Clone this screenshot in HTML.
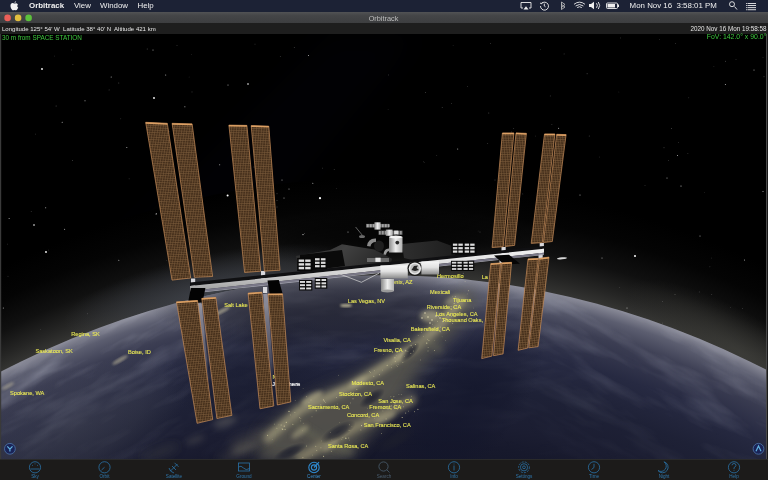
<!DOCTYPE html>
<html><head><meta charset="utf-8">
<style>
html,body{margin:0;padding:0;width:768px;height:480px;overflow:hidden;background:#000;font-family:"Liberation Sans",sans-serif;}
#scene{position:absolute;left:0;top:0;width:768px;height:480px;}
.t{position:absolute;white-space:nowrap;line-height:1;}
#menubar{position:absolute;left:0;top:0;width:768px;height:12px;background:#1c2235;}
#titlebar{position:absolute;left:0;top:12px;width:768px;height:11px;background:linear-gradient(#525355,#454648 30%,#3d3e40);}
#infobar{position:absolute;left:0;top:23px;width:768px;height:11px;background:#1e1e1e;}
#toolbar{position:absolute;left:0;top:459px;width:768px;height:21px;background:#1c1b1a;border-top:0.5px solid #2a2a2a;box-sizing:border-box;}
.mi{position:absolute;color:#f0f0f0;font-size:7.9px;top:2.3px;white-space:nowrap;line-height:1;}
.info{position:absolute;color:#e6e6e6;font-size:6.06px;white-space:nowrap;line-height:1;}
.green{position:absolute;color:#3ec83e;font-size:6.37px;white-space:nowrap;line-height:1;}
text.lb{font-family:"Liberation Sans",sans-serif;font-size:5.65px;fill:#eeec56;stroke:#eeec56;stroke-width:0.08px;}
text.lbw{font-family:"Liberation Sans",sans-serif;font-size:5.9px;fill:#f4f4f4;stroke:#f4f4f4;stroke-width:0.2px;}
.tbl{position:absolute;font-size:4.6px;color:#2f78ae;top:475.3px;white-space:nowrap;line-height:1;transform:translateX(-50%);}
</style></head>
<body>
<svg id="scene" width="768" height="480" viewBox="0 0 768 480">
<defs>
  <radialGradient id="glow" gradientUnits="userSpaceOnUse" cx="385.4" cy="1745.0" r="1151.9" gradientTransform="translate(385.4 1745.0) scale(1 1.3610) translate(-385.4 -1745.0)">
    <stop offset="0.93" stop-color="#363634"/>
    <stop offset="0.9374" stop-color="#343432"/>
    <stop offset="0.9466" stop-color="#252524"/>
    <stop offset="0.9613" stop-color="#101010"/>
    <stop offset="0.9802" stop-color="#040404"/>
    <stop offset="1" stop-color="#000"/>
  </radialGradient>
  <radialGradient id="earth" gradientUnits="userSpaceOnUse" cx="385.4" cy="1745.0" r="1079.9" gradientTransform="translate(385.4 1745.0) scale(1 1.3610) translate(-385.4 -1745.0)">
    <stop offset="0.8748" stop-color="#15172a"/>
    <stop offset="0.8884" stop-color="#17192c"/>
    <stop offset="0.902" stop-color="#1b1d31"/>
    <stop offset="0.9286" stop-color="#1e2136"/>
    <stop offset="0.9551" stop-color="#272a42"/>
    <stop offset="0.9776" stop-color="#3c3e53"/>
    <stop offset="0.9911" stop-color="#5c5e70"/>
    <stop offset="1" stop-color="#8a8b98"/>
  </radialGradient>
  <linearGradient id="truss" x1="0" y1="0" x2="0" y2="1">
    <stop offset="0" stop-color="#f2f2f2"/><stop offset="0.6" stop-color="#d2d2d2"/><stop offset="1" stop-color="#9c9c9c"/>
  </linearGradient>
  <linearGradient id="cylh" x1="0" y1="0" x2="0" y2="1">
    <stop offset="0" stop-color="#f6f6f6"/><stop offset="0.45" stop-color="#e2e2e2"/><stop offset="1" stop-color="#8a8a8a"/>
  </linearGradient>
  <linearGradient id="cylv" x1="0" y1="0" x2="1" y2="0">
    <stop offset="0" stop-color="#8a8a8a"/><stop offset="0.5" stop-color="#ededed"/><stop offset="1" stop-color="#b0b0b0"/>
  </linearGradient>
  <linearGradient id="plane" x1="0" y1="0" x2="1" y2="0.3"><stop offset="0" stop-color="#2a2a2a"/><stop offset="0.5" stop-color="#404040"/><stop offset="1" stop-color="#262626"/></linearGradient>
<pattern id="g0" width="2.55" height="2.35" patternUnits="userSpaceOnUse" patternTransform="translate(145.7 122.3) skewX(-9.03) skewY(2.65)"><rect width="2.55" height="2.35" fill="#46301c"/><rect width="2.55" height="0.5" fill="#7a5a3a"/><rect width="0.5" height="2.35" fill="#7a5a3a"/></pattern>
<pattern id="g1" width="2.55" height="2.35" patternUnits="userSpaceOnUse" patternTransform="translate(172.1 123.3) skewX(-7.95) skewY(1.72)"><rect width="2.55" height="2.35" fill="#46301c"/><rect width="2.55" height="0.5" fill="#7a5a3a"/><rect width="0.5" height="2.35" fill="#7a5a3a"/></pattern>
<pattern id="g2" width="2.55" height="2.35" patternUnits="userSpaceOnUse" patternTransform="translate(228.9 125.1) skewX(-5.74) skewY(0.95)"><rect width="2.55" height="2.35" fill="#46301c"/><rect width="2.55" height="0.5" fill="#7a5a3a"/><rect width="0.5" height="2.35" fill="#7a5a3a"/></pattern>
<pattern id="g3" width="2.55" height="2.35" patternUnits="userSpaceOnUse" patternTransform="translate(251.2 125.6) skewX(-4.81) skewY(1.95)"><rect width="2.55" height="2.35" fill="#46301c"/><rect width="2.55" height="0.5" fill="#7a5a3a"/><rect width="0.5" height="2.35" fill="#7a5a3a"/></pattern>
<pattern id="g4" width="2.55" height="2.35" patternUnits="userSpaceOnUse" patternTransform="translate(176.5 301.9) skewX(-8.46) skewY(-3.81)"><rect width="2.55" height="2.35" fill="#46301c"/><rect width="2.55" height="0.5" fill="#7a5a3a"/><rect width="0.5" height="2.35" fill="#7a5a3a"/></pattern>
<pattern id="g5" width="2.55" height="2.35" patternUnits="userSpaceOnUse" patternTransform="translate(201.8 298.4) skewX(-7.47) skewY(-4.09)"><rect width="2.55" height="2.35" fill="#46301c"/><rect width="2.55" height="0.5" fill="#7a5a3a"/><rect width="0.5" height="2.35" fill="#7a5a3a"/></pattern>
<pattern id="g6" width="2.55" height="2.35" patternUnits="userSpaceOnUse" patternTransform="translate(248.1 293.1) skewX(-5.92) skewY(-3.73)"><rect width="2.55" height="2.35" fill="#46301c"/><rect width="2.55" height="0.5" fill="#7a5a3a"/><rect width="0.5" height="2.35" fill="#7a5a3a"/></pattern>
<pattern id="g7" width="2.55" height="2.35" patternUnits="userSpaceOnUse" patternTransform="translate(268.0 294.0) skewX(-4.59) skewY(-0.79)"><rect width="2.55" height="2.35" fill="#46301c"/><rect width="2.55" height="0.5" fill="#7a5a3a"/><rect width="0.5" height="2.35" fill="#7a5a3a"/></pattern>
<pattern id="g8" width="2.55" height="2.35" patternUnits="userSpaceOnUse" patternTransform="translate(502.4 133.0) skewX(5.26) skewY(0.00)"><rect width="2.55" height="2.35" fill="#46301c"/><rect width="2.55" height="0.5" fill="#7a5a3a"/><rect width="0.5" height="2.35" fill="#7a5a3a"/></pattern>
<pattern id="g9" width="2.55" height="2.35" patternUnits="userSpaceOnUse" patternTransform="translate(516.0 133.0) skewX(5.77) skewY(1.65)"><rect width="2.55" height="2.35" fill="#46301c"/><rect width="2.55" height="0.5" fill="#7a5a3a"/><rect width="0.5" height="2.35" fill="#7a5a3a"/></pattern>
<pattern id="g10" width="2.55" height="2.35" patternUnits="userSpaceOnUse" patternTransform="translate(544.5 134.0) skewX(6.77) skewY(0.00)"><rect width="2.55" height="2.35" fill="#46301c"/><rect width="2.55" height="0.5" fill="#7a5a3a"/><rect width="0.5" height="2.35" fill="#7a5a3a"/></pattern>
<pattern id="g11" width="2.55" height="2.35" patternUnits="userSpaceOnUse" patternTransform="translate(556.7 134.3) skewX(7.18) skewY(1.83)"><rect width="2.55" height="2.35" fill="#46301c"/><rect width="2.55" height="0.5" fill="#7a5a3a"/><rect width="0.5" height="2.35" fill="#7a5a3a"/></pattern>
<pattern id="g12" width="2.55" height="2.35" patternUnits="userSpaceOnUse" patternTransform="translate(490.8 263.6) skewX(5.41) skewY(-3.50)"><rect width="2.55" height="2.35" fill="#46301c"/><rect width="2.55" height="0.5" fill="#7a5a3a"/><rect width="0.5" height="2.35" fill="#7a5a3a"/></pattern>
<pattern id="g13" width="2.55" height="2.35" patternUnits="userSpaceOnUse" patternTransform="translate(501.7 262.9) skewX(5.18) skewY(-3.47)"><rect width="2.55" height="2.35" fill="#46301c"/><rect width="2.55" height="0.5" fill="#7a5a3a"/><rect width="0.5" height="2.35" fill="#7a5a3a"/></pattern>
<pattern id="g14" width="2.55" height="2.35" patternUnits="userSpaceOnUse" patternTransform="translate(528.0 259.0) skewX(6.53) skewY(-3.30)"><rect width="2.55" height="2.35" fill="#46301c"/><rect width="2.55" height="0.5" fill="#7a5a3a"/><rect width="0.5" height="2.35" fill="#7a5a3a"/></pattern>
<pattern id="g15" width="2.55" height="2.35" patternUnits="userSpaceOnUse" patternTransform="translate(539.5 258.3) skewX(6.88) skewY(-7.20)"><rect width="2.55" height="2.35" fill="#46301c"/><rect width="2.55" height="0.5" fill="#7a5a3a"/><rect width="0.5" height="2.35" fill="#7a5a3a"/></pattern>
  <radialGradient id="darkblob"><stop offset="0" stop-color="#12152a" stop-opacity="0.7"/><stop offset="0.6" stop-color="#12152a" stop-opacity="0.45"/><stop offset="1" stop-color="#12152a" stop-opacity="0"/></radialGradient>
  <radialGradient id="darkblob2"><stop offset="0" stop-color="#14172a" stop-opacity="0.45"/><stop offset="0.6" stop-color="#14172a" stop-opacity="0.3"/><stop offset="1" stop-color="#14172a" stop-opacity="0"/></radialGradient>
  <radialGradient id="rglow"><stop offset="0" stop-color="#3e3e3a" stop-opacity="0.75"/><stop offset="0.5" stop-color="#3a3a36" stop-opacity="0.4"/><stop offset="1" stop-color="#3a3a36" stop-opacity="0"/></radialGradient>
  <radialGradient id="cdark"><stop offset="0" stop-color="#000" stop-opacity="0.75"/><stop offset="0.6" stop-color="#000" stop-opacity="0.5"/><stop offset="1" stop-color="#000" stop-opacity="0"/></radialGradient>
  <radialGradient id="edark"><stop offset="0" stop-color="#1a1b26" stop-opacity="0.62"/><stop offset="0.6" stop-color="#1a1b26" stop-opacity="0.45"/><stop offset="1" stop-color="#1a1b26" stop-opacity="0"/></radialGradient>
  <linearGradient id="mastg" x1="0" y1="0" x2="0" y2="1"><stop offset="0" stop-color="#9a9aa8" stop-opacity="0.9"/><stop offset="0.6" stop-color="#7a7a8a" stop-opacity="0.6"/><stop offset="1" stop-color="#6a6a7a" stop-opacity="0"/></linearGradient>
  <radialGradient id="lglow"><stop offset="0" stop-color="#40444e" stop-opacity="0.75"/><stop offset="0.5" stop-color="#3a3e48" stop-opacity="0.45"/><stop offset="1" stop-color="#3a3e48" stop-opacity="0"/></radialGradient>
  <linearGradient id="plane2" x1="0" y1="0" x2="1" y2="0"><stop offset="0" stop-color="#2e2e2e"/><stop offset="1" stop-color="#1e1e1e"/></linearGradient>
  <radialGradient id="hole"><stop offset="0" stop-color="#1c1e2c" stop-opacity="0.8"/><stop offset="0.5" stop-color="#1c1e2c" stop-opacity="0.6"/><stop offset="1" stop-color="#1c1e2c" stop-opacity="0"/></radialGradient>
  <radialGradient id="graycl"><stop offset="0" stop-color="#50525e" stop-opacity="0.4"/><stop offset="0.6" stop-color="#50525e" stop-opacity="0.25"/><stop offset="1" stop-color="#50525e" stop-opacity="0"/></radialGradient>
  <pattern id="grid" width="2.6" height="2.6" patternUnits="userSpaceOnUse">
    <rect width="2.6" height="2.6" fill="#4c3016"/>
    <rect width="2.6" height="0.6" fill="#86603a"/>
    <rect width="0.6" height="2.6" fill="#86603a"/>
  </pattern>
  <clipPath id="earthclip"><ellipse cx="385.4" cy="1745.0" rx="1079.9" ry="1469.7"/></clipPath>
  <filter id="clouds" x="0" y="0" width="100%" height="100%">
    <feTurbulence type="fractalNoise" baseFrequency="0.012 0.055" numOctaves="4" seed="7" result="n"/>
    <feColorMatrix in="n" type="matrix" values="0 0 0 0 0.6  0 0 0 0 0.62  0 0 0 0 0.72  0 0 0 2.2 -1.0"/>
  </filter>
  <filter id="clouds2" x="0" y="0" width="100%" height="100%">
    <feTurbulence type="fractalNoise" baseFrequency="0.012 0.055" numOctaves="4" seed="3" result="n"/>
    <feColorMatrix in="n" type="matrix" values="0 0 0 0 0.6  0 0 0 0 0.62  0 0 0 0 0.72  0 0 0 2.2 -1.0"/>
  </filter>
  <filter id="clouds3" x="0" y="0" width="100%" height="100%">
    <feTurbulence type="fractalNoise" baseFrequency="0.012 0.055" numOctaves="4" seed="11" result="n"/>
    <feColorMatrix in="n" type="matrix" values="0 0 0 0 0.6  0 0 0 0 0.62  0 0 0 0 0.72  0 0 0 2.2 -1.0"/>
  </filter>
  <linearGradient id="gL" x1="0" y1="0" x2="1" y2="0" gradientUnits="objectBoundingBox"><stop offset="0" stop-color="#fff"/><stop offset="0.7" stop-color="#fff"/><stop offset="1" stop-color="#000"/></linearGradient>
  <linearGradient id="gC" x1="0" y1="0" x2="1" y2="0"><stop offset="0" stop-color="#000"/><stop offset="0.25" stop-color="#fff"/><stop offset="0.75" stop-color="#fff"/><stop offset="1" stop-color="#000"/></linearGradient>
  <linearGradient id="gR" x1="0" y1="0" x2="1" y2="0"><stop offset="0" stop-color="#000"/><stop offset="0.3" stop-color="#fff"/><stop offset="1" stop-color="#fff"/></linearGradient>
  <radialGradient id="radm" gradientUnits="userSpaceOnUse" cx="385.4" cy="1745.0" r="1079.9" gradientTransform="translate(385.4 1745.0) scale(1 1.3610) translate(-385.4 -1745.0)">
    <stop offset="0.8837" stop-color="#000"/><stop offset="0.9197" stop-color="#1a1a1a"/><stop offset="0.9646" stop-color="#3c3c3c"/><stop offset="1" stop-color="#5e5e5e"/>
  </radialGradient>
  <mask id="mRad" maskUnits="userSpaceOnUse" x="0" y="0" width="768" height="480"><rect width="768" height="480" fill="url(#radm)"/></mask>
  <mask id="mL" maskUnits="userSpaceOnUse" x="0" y="0" width="768" height="480"><rect x="0" y="0" width="300" height="480" fill="url(#gL)"/></mask>
  <mask id="mC" maskUnits="userSpaceOnUse" x="0" y="0" width="768" height="480"><rect x="200" y="0" width="400" height="480" fill="url(#gC)"/></mask>
  <mask id="mR" maskUnits="userSpaceOnUse" x="0" y="0" width="768" height="480"><rect x="480" y="0" width="288" height="480" fill="url(#gR)"/></mask>
  <filter id="b2" filterUnits="userSpaceOnUse" x="-100" y="-100" width="968" height="680"><feGaussianBlur stdDeviation="2"/></filter>
  <filter id="b5" filterUnits="userSpaceOnUse" x="-100" y="-100" width="968" height="680"><feGaussianBlur stdDeviation="5"/></filter>
  <filter id="b1"><feGaussianBlur stdDeviation="1"/></filter>
  <filter id="b3" filterUnits="userSpaceOnUse" x="-100" y="-100" width="968" height="680"><feGaussianBlur stdDeviation="3"/></filter>
  <filter id="b8" filterUnits="userSpaceOnUse" x="-100" y="-100" width="968" height="680"><feGaussianBlur stdDeviation="8"/></filter>
  <filter id="b15" filterUnits="userSpaceOnUse" x="-100" y="-100" width="968" height="680"><feGaussianBlur stdDeviation="15"/></filter>
</defs>
<rect width="768" height="480" fill="#000"/>
<!-- faint milky way -->
<path d="M330,34 L420,34 L200,300 L60,300 Z" fill="#0c1020" opacity="0.14" filter="url(#b15)"/>
<!-- atmosphere glow -->
<ellipse cx="385.4" cy="1745.0" rx="1151.9" ry="1567.7" fill="url(#glow)"/>
<ellipse cx="740" cy="352" rx="130" ry="38" transform="rotate(30 740 352)" fill="url(#rglow)"/>
<ellipse cx="390" cy="240" rx="150" ry="32" fill="url(#cdark)"/>
<ellipse cx="210" cy="292" rx="150" ry="38" transform="rotate(-12 210 292)" fill="url(#lglow)"/>
<g id="stars"><circle cx="42.0" cy="69.0" r="0.90" fill="#fff" opacity="1.00"/>
<circle cx="154.0" cy="98.0" r="0.90" fill="#fff" opacity="1.00"/>
<circle cx="248.0" cy="84.0" r="0.80" fill="#fff" opacity="1.00"/>
<circle cx="85.0" cy="100.7" r="0.50" fill="#fff" opacity="0.75"/>
<circle cx="153.0" cy="50.0" r="0.50" fill="#fff" opacity="0.75"/>
<circle cx="34.0" cy="225.0" r="0.80" fill="#fff" opacity="1.00"/>
<circle cx="46.0" cy="252.0" r="0.90" fill="#fff" opacity="1.00"/>
<circle cx="156.0" cy="214.0" r="0.50" fill="#fff" opacity="0.75"/>
<circle cx="320.0" cy="198.2" r="1.10" fill="#fff" opacity="1.00"/>
<circle cx="227.6" cy="195.6" r="1.00" fill="#fff" opacity="1.00"/>
<circle cx="303.0" cy="234.6" r="0.70" fill="#fff" opacity="0.75"/>
<circle cx="277.0" cy="193.8" r="0.45" fill="#fff" opacity="0.45"/>
<circle cx="277.0" cy="200.5" r="0.45" fill="#fff" opacity="0.45"/>
<circle cx="277.0" cy="207.0" r="0.45" fill="#fff" opacity="0.45"/>
<circle cx="312.8" cy="183.3" r="0.50" fill="#fff" opacity="0.75"/>
<circle cx="156.5" cy="213.8" r="0.50" fill="#fff" opacity="0.75"/>
<circle cx="254.0" cy="167.0" r="0.45" fill="#fff" opacity="0.45"/>
<circle cx="635.0" cy="256.0" r="1.00" fill="#fff" opacity="1.00"/>
<circle cx="504.0" cy="249.0" r="0.90" fill="#fff" opacity="1.00"/>
<circle cx="602.0" cy="258.0" r="0.50" fill="#fff" opacity="0.75"/>
<circle cx="627.0" cy="308.0" r="0.50" fill="#fff" opacity="0.75"/>
<circle cx="681.0" cy="186.0" r="0.60" fill="#fff" opacity="0.75"/>
<circle cx="667.0" cy="178.0" r="0.50" fill="#fff" opacity="0.75"/>
<circle cx="228.0" cy="85.0" r="0.50" fill="#fff" opacity="0.75"/>
<circle cx="198.0" cy="300.0" r="0.50" fill="#fff" opacity="0.75"/>
<circle cx="289.0" cy="189.0" r="0.50" fill="#fff" opacity="0.75"/>
<circle cx="282.0" cy="180.0" r="0.50" fill="#fff" opacity="0.75"/>
<circle cx="284.0" cy="198.0" r="0.50" fill="#fff" opacity="0.75"/>
<circle cx="348.0" cy="232.0" r="0.50" fill="#fff" opacity="0.75"/>
<circle cx="700.0" cy="236.0" r="0.50" fill="#fff" opacity="0.75"/>
<circle cx="580.0" cy="195.0" r="0.50" fill="#fff" opacity="0.75"/>
<circle cx="495.0" cy="180.0" r="0.40" fill="#fff" opacity="0.45"/>
<circle cx="480.0" cy="232.0" r="0.40" fill="#fff" opacity="0.45"/>
<circle cx="490.5" cy="43.4" r="0.40" fill="#fff" opacity="0.45"/>
<circle cx="189.1" cy="77.0" r="0.30" fill="#fff" opacity="0.45"/>
<circle cx="519.0" cy="298.3" r="0.30" fill="#fff" opacity="0.45"/>
<circle cx="453.1" cy="45.3" r="0.30" fill="#fff" opacity="0.45"/>
<circle cx="169.0" cy="184.6" r="0.30" fill="#fff" opacity="0.45"/>
<circle cx="430.8" cy="246.5" r="0.50" fill="#fff" opacity="0.75"/>
<circle cx="322.5" cy="168.1" r="0.40" fill="#fff" opacity="0.45"/>
<circle cx="620.4" cy="37.9" r="0.35" fill="#fff" opacity="0.45"/>
<circle cx="535.4" cy="136.0" r="0.35" fill="#fff" opacity="0.45"/>
<circle cx="166.5" cy="260.5" r="0.30" fill="#fff" opacity="0.45"/>
<circle cx="72.9" cy="64.4" r="0.40" fill="#fff" opacity="0.45"/>
<circle cx="463.2" cy="273.3" r="0.45" fill="#fff" opacity="0.45"/>
<circle cx="411.7" cy="322.1" r="0.45" fill="#fff" opacity="0.45"/>
<circle cx="62.2" cy="122.2" r="0.50" fill="#fff" opacity="0.75"/>
<circle cx="678.5" cy="142.3" r="0.35" fill="#fff" opacity="0.45"/>
<circle cx="540.3" cy="49.5" r="0.35" fill="#fff" opacity="0.45"/>
<circle cx="592.6" cy="325.7" r="0.35" fill="#fff" opacity="0.45"/>
<circle cx="664.0" cy="147.8" r="0.45" fill="#fff" opacity="0.45"/>
<circle cx="487.7" cy="143.3" r="0.40" fill="#fff" opacity="0.45"/>
<circle cx="273.4" cy="233.0" r="0.30" fill="#fff" opacity="0.45"/>
<circle cx="467.4" cy="86.3" r="0.35" fill="#fff" opacity="0.45"/>
<circle cx="126.8" cy="147.6" r="0.50" fill="#fff" opacity="0.75"/>
<circle cx="169.8" cy="131.3" r="0.30" fill="#fff" opacity="0.45"/>
<circle cx="177.0" cy="45.4" r="0.40" fill="#fff" opacity="0.45"/>
<circle cx="308.5" cy="55.5" r="0.50" fill="#fff" opacity="0.75"/>
<circle cx="671.5" cy="128.5" r="0.45" fill="#fff" opacity="0.45"/>
<circle cx="304.3" cy="304.9" r="0.45" fill="#fff" opacity="0.45"/>
<circle cx="111.2" cy="77.1" r="0.50" fill="#fff" opacity="0.75"/>
<circle cx="413.8" cy="255.6" r="0.45" fill="#fff" opacity="0.45"/>
<circle cx="687.9" cy="153.4" r="0.35" fill="#fff" opacity="0.45"/>
<circle cx="764.0" cy="76.7" r="0.45" fill="#fff" opacity="0.45"/>
<circle cx="71.5" cy="49.9" r="0.30" fill="#fff" opacity="0.45"/>
<circle cx="118.8" cy="83.0" r="0.45" fill="#fff" opacity="0.45"/>
<circle cx="457.7" cy="149.1" r="0.50" fill="#fff" opacity="0.75"/>
<circle cx="763.0" cy="191.6" r="0.50" fill="#fff" opacity="0.75"/>
<circle cx="659.6" cy="39.4" r="0.30" fill="#fff" opacity="0.45"/>
<circle cx="522.8" cy="193.9" r="0.40" fill="#fff" opacity="0.45"/>
<circle cx="589.2" cy="136.0" r="0.40" fill="#fff" opacity="0.45"/>
<circle cx="334.2" cy="169.4" r="0.40" fill="#fff" opacity="0.45"/>
<circle cx="744.5" cy="260.0" r="0.50" fill="#fff" opacity="0.75"/>
<circle cx="699.2" cy="291.9" r="0.40" fill="#fff" opacity="0.45"/>
<circle cx="645.0" cy="185.3" r="0.35" fill="#fff" opacity="0.45"/>
<circle cx="118.8" cy="260.2" r="0.50" fill="#fff" opacity="0.75"/>
<circle cx="730.5" cy="307.2" r="0.30" fill="#fff" opacity="0.45"/>
<circle cx="459.6" cy="179.7" r="0.30" fill="#fff" opacity="0.45"/>
<circle cx="711.8" cy="294.3" r="0.40" fill="#fff" opacity="0.45"/>
<circle cx="184.9" cy="106.8" r="0.50" fill="#fff" opacity="0.75"/>
<circle cx="725.5" cy="61.2" r="0.45" fill="#fff" opacity="0.45"/>
<circle cx="625.4" cy="323.5" r="0.50" fill="#fff" opacity="0.75"/>
<circle cx="587.1" cy="73.7" r="0.45" fill="#fff" opacity="0.45"/>
<circle cx="725.4" cy="84.5" r="0.50" fill="#fff" opacity="0.75"/>
<circle cx="668.5" cy="160.4" r="0.35" fill="#fff" opacity="0.45"/>
<circle cx="711.7" cy="258.0" r="0.35" fill="#fff" opacity="0.45"/>
<circle cx="546.7" cy="153.3" r="0.40" fill="#fff" opacity="0.45"/>
<circle cx="336.7" cy="188.2" r="0.30" fill="#fff" opacity="0.45"/>
<circle cx="191.4" cy="54.8" r="0.30" fill="#fff" opacity="0.45"/>
<circle cx="451.5" cy="103.7" r="0.35" fill="#fff" opacity="0.45"/>
<circle cx="7.5" cy="244.1" r="0.30" fill="#fff" opacity="0.45"/>
<circle cx="176.9" cy="302.2" r="0.40" fill="#fff" opacity="0.45"/>
<circle cx="56.1" cy="106.0" r="0.45" fill="#fff" opacity="0.45"/>
<circle cx="165.7" cy="74.9" r="0.50" fill="#fff" opacity="0.75"/>
<circle cx="442.2" cy="107.4" r="0.45" fill="#fff" opacity="0.45"/>
<circle cx="618.9" cy="92.0" r="0.30" fill="#fff" opacity="0.45"/>
<circle cx="505.5" cy="140.2" r="0.45" fill="#fff" opacity="0.45"/>
<circle cx="358.8" cy="250.3" r="0.30" fill="#fff" opacity="0.45"/>
<circle cx="48.3" cy="250.1" r="0.30" fill="#fff" opacity="0.45"/>
<circle cx="192.0" cy="91.9" r="0.45" fill="#fff" opacity="0.45"/>
<circle cx="109.1" cy="89.9" r="0.45" fill="#fff" opacity="0.45"/>
<circle cx="192.9" cy="307.4" r="0.45" fill="#fff" opacity="0.45"/>
<circle cx="619.3" cy="287.7" r="0.30" fill="#fff" opacity="0.45"/>
<circle cx="40.6" cy="329.8" r="0.30" fill="#fff" opacity="0.45"/>
<circle cx="742.3" cy="308.4" r="0.35" fill="#fff" opacity="0.45"/>
<circle cx="129.1" cy="178.8" r="0.35" fill="#fff" opacity="0.45"/>
<circle cx="662.6" cy="301.3" r="0.35" fill="#fff" opacity="0.45"/>
<circle cx="291.5" cy="325.7" r="0.40" fill="#fff" opacity="0.45"/>
<circle cx="709.9" cy="266.8" r="0.40" fill="#fff" opacity="0.45"/>
<circle cx="325.2" cy="317.5" r="0.50" fill="#fff" opacity="0.75"/>
<circle cx="507.7" cy="179.1" r="0.35" fill="#fff" opacity="0.45"/>
<circle cx="228.7" cy="320.8" r="0.50" fill="#fff" opacity="0.75"/>
<circle cx="564.1" cy="53.9" r="0.40" fill="#fff" opacity="0.45"/>
<circle cx="45.7" cy="207.7" r="0.50" fill="#fff" opacity="0.75"/>
<circle cx="704.4" cy="192.2" r="0.30" fill="#fff" opacity="0.45"/>
<circle cx="736.0" cy="59.6" r="0.35" fill="#fff" opacity="0.45"/>
<circle cx="54.4" cy="56.0" r="0.35" fill="#fff" opacity="0.45"/>
<circle cx="310.5" cy="312.8" r="0.50" fill="#fff" opacity="0.75"/>
<circle cx="190.1" cy="210.8" r="0.50" fill="#fff" opacity="0.75"/>
<circle cx="64.6" cy="229.3" r="0.50" fill="#fff" opacity="0.75"/>
<circle cx="401.4" cy="310.8" r="0.35" fill="#fff" opacity="0.45"/>
<circle cx="513.7" cy="128.4" r="0.40" fill="#fff" opacity="0.45"/>
<circle cx="304.4" cy="233.5" r="0.40" fill="#fff" opacity="0.45"/>
<circle cx="351.3" cy="309.1" r="0.30" fill="#fff" opacity="0.45"/>
<circle cx="9.1" cy="218.6" r="0.50" fill="#fff" opacity="0.75"/>
<circle cx="763.0" cy="57.5" r="0.35" fill="#fff" opacity="0.45"/>
<circle cx="388.5" cy="74.9" r="0.40" fill="#fff" opacity="0.45"/>
<circle cx="675.0" cy="294.5" r="0.40" fill="#fff" opacity="0.45"/>
<circle cx="219.7" cy="164.8" r="0.50" fill="#fff" opacity="0.75"/>
<circle cx="539.5" cy="215.8" r="0.50" fill="#fff" opacity="0.75"/>
<circle cx="8.0" cy="276.2" r="0.40" fill="#fff" opacity="0.45"/>
<circle cx="713.9" cy="66.5" r="0.35" fill="#fff" opacity="0.45"/>
<circle cx="204.1" cy="297.6" r="0.50" fill="#fff" opacity="0.75"/>
<circle cx="120.8" cy="118.8" r="0.35" fill="#fff" opacity="0.45"/>
<circle cx="550.3" cy="95.9" r="0.40" fill="#fff" opacity="0.45"/>
<circle cx="388.1" cy="109.8" r="0.30" fill="#fff" opacity="0.45"/>
<circle cx="72.5" cy="160.5" r="0.40" fill="#fff" opacity="0.45"/>
<circle cx="35.7" cy="134.1" r="0.35" fill="#fff" opacity="0.45"/>
<circle cx="488.8" cy="113.0" r="0.45" fill="#fff" opacity="0.45"/>
<circle cx="423.5" cy="161.7" r="0.30" fill="#fff" opacity="0.45"/>
<circle cx="87.5" cy="313.8" r="0.35" fill="#fff" opacity="0.45"/>
<circle cx="418.8" cy="281.4" r="0.50" fill="#fff" opacity="0.75"/>
<circle cx="424.1" cy="162.4" r="0.30" fill="#fff" opacity="0.45"/>
<circle cx="237.5" cy="300.3" r="0.30" fill="#fff" opacity="0.45"/>
<circle cx="688.8" cy="97.8" r="0.35" fill="#fff" opacity="0.45"/>
<circle cx="511.5" cy="140.0" r="0.50" fill="#fff" opacity="0.75"/>
<circle cx="677.5" cy="155.5" r="0.50" fill="#fff" opacity="0.75"/>
<circle cx="574.6" cy="308.2" r="0.35" fill="#fff" opacity="0.45"/>
<circle cx="662.6" cy="323.0" r="0.35" fill="#fff" opacity="0.45"/>
<circle cx="675.4" cy="43.3" r="0.40" fill="#fff" opacity="0.45"/>
<circle cx="599.7" cy="157.0" r="0.35" fill="#fff" opacity="0.45"/>
<circle cx="205.8" cy="267.5" r="0.30" fill="#fff" opacity="0.45"/>
<circle cx="294.3" cy="47.4" r="0.45" fill="#fff" opacity="0.45"/>
<circle cx="171.9" cy="276.1" r="0.45" fill="#fff" opacity="0.45"/>
<circle cx="269.1" cy="277.2" r="0.35" fill="#fff" opacity="0.45"/>
<circle cx="172.3" cy="230.0" r="0.45" fill="#fff" opacity="0.45"/>
<circle cx="252.8" cy="290.1" r="0.40" fill="#fff" opacity="0.45"/>
<circle cx="270.3" cy="185.8" r="0.50" fill="#fff" opacity="0.75"/>
<circle cx="255.0" cy="44.1" r="0.40" fill="#fff" opacity="0.45"/>
<circle cx="138.4" cy="319.0" r="0.40" fill="#fff" opacity="0.45"/>
<circle cx="31.2" cy="211.4" r="0.40" fill="#fff" opacity="0.45"/>
<circle cx="558.6" cy="128.2" r="0.50" fill="#fff" opacity="0.75"/>
<circle cx="754.0" cy="70.0" r="0.50" fill="#fff" opacity="0.75"/>
<circle cx="147.2" cy="49.0" r="0.45" fill="#fff" opacity="0.45"/>
<circle cx="3.3" cy="308.1" r="0.50" fill="#fff" opacity="0.75"/>
<circle cx="526.8" cy="312.4" r="0.35" fill="#fff" opacity="0.45"/>
<circle cx="280.3" cy="56.6" r="0.40" fill="#fff" opacity="0.45"/>
<circle cx="478.1" cy="231.0" r="0.30" fill="#fff" opacity="0.45"/>
<circle cx="551.9" cy="124.3" r="0.40" fill="#fff" opacity="0.45"/>
<circle cx="511.5" cy="131.9" r="0.40" fill="#fff" opacity="0.45"/>
<circle cx="425.6" cy="92.4" r="0.45" fill="#fff" opacity="0.45"/>
<circle cx="519.5" cy="301.4" r="0.50" fill="#fff" opacity="0.75"/>
<circle cx="436.8" cy="155.4" r="0.30" fill="#fff" opacity="0.45"/></g>
<!-- earth -->
<ellipse cx="385.4" cy="1745.0" rx="1079.9" ry="1469.7" fill="url(#earth)"/>
<g clip-path="url(#earthclip)">
  <g mask="url(#mRad)">
    <g mask="url(#mL)"><g transform="rotate(-28 130 360)"><rect x="-150" y="200" width="560" height="320" filter="url(#clouds)"/></g></g>
    <g mask="url(#mC)" opacity="0.8"><g transform="rotate(-4 384 330)"><rect x="140" y="230" width="500" height="260" filter="url(#clouds2)"/></g></g>
    <g mask="url(#mR)" opacity="0.75"><g transform="rotate(28 640 360)"><rect x="380" y="200" width="560" height="320" filter="url(#clouds3)"/></g></g>
  </g>
  <ellipse cx="315" cy="306" rx="165" ry="46" fill="url(#edark)"/>
  <ellipse cx="70" cy="430" rx="130" ry="55" transform="rotate(-25 70 430)" fill="url(#graycl)"/>
  <!-- city light band -->
  <ellipse cx="470" cy="400" rx="110" ry="50" transform="rotate(-55 470 400)" fill="url(#darkblob)"/>
  <ellipse cx="250" cy="365" rx="90" ry="45" transform="rotate(-15 250 365)" fill="url(#darkblob2)"/>
  <path d="M255,462 L262,432 L300,402 L350,380 L390,356 L425,326 L448,300 L470,288 L478,300 L452,336 L420,370 L400,402 L372,432 L345,462 Z" fill="#5a5850" opacity="0.85" filter="url(#b8)"/>
  <g filter="url(#b3)" fill="none" stroke-linecap="round">
    <path d="M268,438 L300,410 L349,388 L385,366 L417,346 L440,325 L462,300" stroke="#a09a7a" stroke-width="9" opacity="0.8"/>
    <path d="M300,458 L354,428 L396,408 L412,400" stroke="#948e70" stroke-width="9" opacity="0.75"/>
    <path d="M290,420 L320,440 L350,452" stroke="#6a6858" stroke-width="7" opacity="0.5"/>
    <path d="M405,355 L425,340 L440,350" stroke="#6a6858" stroke-width="6" opacity="0.5"/>
  </g>
  <g>
    <ellipse cx="338" cy="432" rx="20" ry="7" transform="rotate(-30 338 432)" fill="url(#hole)"/>
    <ellipse cx="372" cy="398" rx="15" ry="6" transform="rotate(-35 372 398)" fill="url(#hole)"/>
    <ellipse cx="290" cy="452" rx="18" ry="6" transform="rotate(-25 290 452)" fill="url(#hole)"/>
    <ellipse cx="410" cy="352" rx="13" ry="5" transform="rotate(-45 410 352)" fill="url(#hole)"/>
    <ellipse cx="395" cy="440" rx="24" ry="8" transform="rotate(-30 395 440)" fill="url(#hole)"/>
  </g>
  <g filter="url(#b3)" fill="#8a8878">
    <ellipse cx="225" cy="422" rx="12" ry="4" transform="rotate(-20 225 422)" opacity="0.35"/>
    <ellipse cx="245" cy="448" rx="14" ry="4" transform="rotate(-20 245 448)" opacity="0.3"/>
    <ellipse cx="195" cy="440" rx="10" ry="3" transform="rotate(-20 195 440)" opacity="0.25"/>
  </g>
  <g filter="url(#b2)" fill="#c0b890">
    <ellipse cx="312" cy="398" rx="12" ry="4" transform="rotate(-30 312 398)" opacity="0.6"/>
    <ellipse cx="358" cy="382" rx="10" ry="3" transform="rotate(-30 358 382)" opacity="0.5"/>
    <ellipse cx="385" cy="418" rx="12" ry="3.5" transform="rotate(-25 385 418)" opacity="0.5"/>
    <ellipse cx="430" cy="316" rx="10" ry="6" opacity="0.6"/>
    <ellipse cx="452" cy="300" rx="8" ry="3" transform="rotate(-30 452 300)" opacity="0.5"/>
    <ellipse cx="400" cy="356" rx="9" ry="3" transform="rotate(-40 400 356)" opacity="0.5"/>
    <ellipse cx="300" cy="432" rx="10" ry="3.5" transform="rotate(-35 300 432)" opacity="0.45"/>
    <ellipse cx="330" cy="446" rx="9" ry="3" transform="rotate(-35 330 446)" opacity="0.4"/>
    <ellipse cx="262" cy="307" rx="8" ry="2.2" opacity="0.45"/>
  </g>
  <g filter="url(#b5)" fill="#6a6858">
    <ellipse cx="250" cy="440" rx="22" ry="7" transform="rotate(-20 250 440)" opacity="0.35"/>
    <ellipse cx="235" cy="455" rx="18" ry="5" transform="rotate(-15 235 455)" opacity="0.3"/>
    <ellipse cx="160" cy="452" rx="20" ry="5" transform="rotate(-20 160 452)" opacity="0.2"/>
  </g>
  <circle cx="353.0" cy="398.7" r="0.55" fill="#f0e8b0" opacity="0.54"/>
<circle cx="274.5" cy="424.1" r="0.45" fill="#f0e8b0" opacity="0.63"/>
<circle cx="276.9" cy="428.2" r="0.35" fill="#f0e8b0" opacity="0.90"/>
<circle cx="373.8" cy="376.3" r="0.55" fill="#f0e8b0" opacity="0.50"/>
<circle cx="370.6" cy="372.3" r="0.35" fill="#f0e8b0" opacity="0.87"/>
<circle cx="303.1" cy="388.6" r="0.35" fill="#f0e8b0" opacity="0.54"/>
<circle cx="382.4" cy="370.0" r="0.35" fill="#f0e8b0" opacity="0.81"/>
<circle cx="281.1" cy="425.0" r="0.45" fill="#f0e8b0" opacity="0.90"/>
<circle cx="300.8" cy="418.4" r="0.45" fill="#f0e8b0" opacity="0.50"/>
<circle cx="442.1" cy="336.8" r="0.35" fill="#f0e8b0" opacity="0.44"/>
<circle cx="404.6" cy="356.6" r="0.35" fill="#f0e8b0" opacity="0.47"/>
<circle cx="285.1" cy="429.4" r="0.55" fill="#f0e8b0" opacity="0.53"/>
<circle cx="412.6" cy="347.3" r="0.45" fill="#f0e8b0" opacity="0.47"/>
<circle cx="394.9" cy="357.7" r="0.55" fill="#f0e8b0" opacity="0.65"/>
<circle cx="432.7" cy="324.2" r="0.35" fill="#f0e8b0" opacity="0.75"/>
<circle cx="383.2" cy="354.5" r="0.35" fill="#f0e8b0" opacity="0.65"/>
<circle cx="420.4" cy="359.9" r="0.45" fill="#f0e8b0" opacity="0.60"/>
<circle cx="278.9" cy="424.8" r="0.35" fill="#f0e8b0" opacity="0.40"/>
<circle cx="294.9" cy="412.6" r="0.45" fill="#f0e8b0" opacity="0.74"/>
<circle cx="418.2" cy="335.4" r="0.45" fill="#f0e8b0" opacity="0.55"/>
<circle cx="440.7" cy="330.1" r="0.35" fill="#f0e8b0" opacity="0.61"/>
<circle cx="395.4" cy="350.4" r="0.45" fill="#f0e8b0" opacity="0.56"/>
<circle cx="449.4" cy="320.9" r="0.45" fill="#f0e8b0" opacity="0.40"/>
<circle cx="428.0" cy="350.9" r="0.45" fill="#f0e8b0" opacity="0.82"/>
<circle cx="428.1" cy="347.7" r="0.35" fill="#f0e8b0" opacity="0.87"/>
<circle cx="325.7" cy="402.3" r="0.35" fill="#f0e8b0" opacity="0.76"/>
<circle cx="267.6" cy="435.4" r="0.55" fill="#f0e8b0" opacity="0.54"/>
<circle cx="303.2" cy="423.3" r="0.45" fill="#f0e8b0" opacity="0.43"/>
<circle cx="292.9" cy="424.2" r="0.45" fill="#f0e8b0" opacity="0.90"/>
<circle cx="452.6" cy="323.5" r="0.55" fill="#f0e8b0" opacity="0.44"/>
<circle cx="405.5" cy="350.2" r="0.45" fill="#f0e8b0" opacity="0.78"/>
<circle cx="442.6" cy="328.6" r="0.35" fill="#f0e8b0" opacity="0.54"/>
<circle cx="369.5" cy="371.3" r="0.35" fill="#f0e8b0" opacity="0.82"/>
<circle cx="299.6" cy="417.8" r="0.45" fill="#f0e8b0" opacity="0.72"/>
<circle cx="309.0" cy="402.2" r="0.35" fill="#f0e8b0" opacity="0.52"/>
<circle cx="336.6" cy="397.5" r="0.45" fill="#f0e8b0" opacity="0.62"/>
<circle cx="338.7" cy="375.3" r="0.45" fill="#f0e8b0" opacity="0.49"/>
<circle cx="409.2" cy="341.9" r="0.45" fill="#f0e8b0" opacity="0.79"/>
<circle cx="434.5" cy="350.5" r="0.45" fill="#f0e8b0" opacity="0.84"/>
<circle cx="442.7" cy="321.6" r="0.55" fill="#f0e8b0" opacity="0.60"/>
<circle cx="358.7" cy="382.4" r="0.55" fill="#f0e8b0" opacity="0.67"/>
<circle cx="413.5" cy="351.0" r="0.55" fill="#f0e8b0" opacity="0.44"/>
<circle cx="316.2" cy="410.7" r="0.55" fill="#f0e8b0" opacity="0.61"/>
<circle cx="282.7" cy="429.2" r="0.55" fill="#f0e8b0" opacity="0.78"/>
<circle cx="286.3" cy="422.3" r="0.55" fill="#f0e8b0" opacity="0.83"/>
<circle cx="442.0" cy="315.9" r="0.45" fill="#f0e8b0" opacity="0.42"/>
<circle cx="320.8" cy="404.9" r="0.55" fill="#f0e8b0" opacity="0.46"/>
<circle cx="306.3" cy="396.8" r="0.45" fill="#f0e8b0" opacity="0.61"/>
<circle cx="374.3" cy="370.8" r="0.45" fill="#f0e8b0" opacity="0.55"/>
<circle cx="284.2" cy="426.1" r="0.55" fill="#f0e8b0" opacity="0.77"/>
<circle cx="440.3" cy="327.1" r="0.55" fill="#f0e8b0" opacity="0.53"/>
<circle cx="451.1" cy="306.6" r="0.55" fill="#f0e8b0" opacity="0.52"/>
<circle cx="402.9" cy="362.5" r="0.45" fill="#f0e8b0" opacity="0.68"/>
<circle cx="467.2" cy="293.9" r="0.45" fill="#f0e8b0" opacity="0.46"/>
<circle cx="324.5" cy="401.1" r="0.55" fill="#f0e8b0" opacity="0.48"/>
<circle cx="417.9" cy="329.9" r="0.35" fill="#f0e8b0" opacity="0.65"/>
<circle cx="350.4" cy="402.9" r="0.45" fill="#f0e8b0" opacity="0.68"/>
<circle cx="468.7" cy="290.7" r="0.45" fill="#f0e8b0" opacity="0.85"/>
<circle cx="437.5" cy="321.2" r="0.45" fill="#f0e8b0" opacity="0.61"/>
<circle cx="387.2" cy="365.4" r="0.55" fill="#f0e8b0" opacity="0.50"/>
<circle cx="272.2" cy="439.4" r="0.35" fill="#f0e8b0" opacity="0.49"/>
<circle cx="428.9" cy="340.4" r="0.55" fill="#f0e8b0" opacity="0.45"/>
<circle cx="473.5" cy="308.0" r="0.35" fill="#f0e8b0" opacity="0.58"/>
<circle cx="356.8" cy="389.5" r="0.55" fill="#f0e8b0" opacity="0.50"/>
<circle cx="312.0" cy="416.8" r="0.35" fill="#f0e8b0" opacity="0.77"/>
<circle cx="453.7" cy="307.3" r="0.45" fill="#f0e8b0" opacity="0.59"/>
<circle cx="415.4" cy="344.5" r="0.55" fill="#f0e8b0" opacity="0.66"/>
<circle cx="427.6" cy="339.2" r="0.45" fill="#f0e8b0" opacity="0.54"/>
<circle cx="423.5" cy="336.2" r="0.35" fill="#f0e8b0" opacity="0.65"/>
<circle cx="426.8" cy="343.1" r="0.55" fill="#f0e8b0" opacity="0.88"/>
<circle cx="451.8" cy="309.2" r="0.35" fill="#f0e8b0" opacity="0.74"/>
<circle cx="454.2" cy="303.2" r="0.55" fill="#f0e8b0" opacity="0.71"/>
<circle cx="302.5" cy="430.8" r="0.35" fill="#f0e8b0" opacity="0.45"/>
<circle cx="445.4" cy="340.3" r="0.35" fill="#f0e8b0" opacity="0.59"/>
<circle cx="455.3" cy="296.8" r="0.55" fill="#f0e8b0" opacity="0.62"/>
<circle cx="395.2" cy="361.2" r="0.45" fill="#f0e8b0" opacity="0.82"/>
<circle cx="452.4" cy="296.5" r="0.35" fill="#f0e8b0" opacity="0.46"/>
<circle cx="438.4" cy="316.5" r="0.45" fill="#f0e8b0" opacity="0.75"/>
<circle cx="440.5" cy="331.8" r="0.45" fill="#f0e8b0" opacity="0.88"/>
<circle cx="337.7" cy="403.9" r="0.45" fill="#f0e8b0" opacity="0.40"/>
<circle cx="323.5" cy="399.8" r="0.45" fill="#f0e8b0" opacity="0.87"/>
<circle cx="444.7" cy="320.6" r="0.55" fill="#f0e8b0" opacity="0.83"/>
<circle cx="407.9" cy="351.3" r="0.45" fill="#f0e8b0" opacity="0.52"/>
<circle cx="441.3" cy="312.3" r="0.35" fill="#f0e8b0" opacity="0.51"/>
<circle cx="398.1" cy="364.2" r="0.35" fill="#f0e8b0" opacity="0.66"/>
<circle cx="319.2" cy="408.2" r="0.55" fill="#f0e8b0" opacity="0.45"/>
<circle cx="289.0" cy="411.4" r="0.55" fill="#f0e8b0" opacity="0.75"/>
<circle cx="391.4" cy="367.8" r="0.45" fill="#f0e8b0" opacity="0.44"/>
<circle cx="396.4" cy="355.7" r="0.35" fill="#f0e8b0" opacity="0.40"/>
<circle cx="396.6" cy="365.2" r="0.35" fill="#f0e8b0" opacity="0.52"/>
<circle cx="421.3" cy="332.2" r="0.35" fill="#f0e8b0" opacity="0.72"/>
<circle cx="437.2" cy="329.7" r="0.45" fill="#f0e8b0" opacity="0.88"/>
<circle cx="397.0" cy="352.2" r="0.55" fill="#f0e8b0" opacity="0.53"/>
<circle cx="411.1" cy="345.6" r="0.55" fill="#f0e8b0" opacity="0.62"/>
<circle cx="391.8" cy="364.5" r="0.35" fill="#f0e8b0" opacity="0.45"/>
<circle cx="451.5" cy="316.3" r="0.45" fill="#f0e8b0" opacity="0.66"/>
<circle cx="410.8" cy="353.5" r="0.55" fill="#f0e8b0" opacity="0.50"/>
<circle cx="300.6" cy="420.9" r="0.45" fill="#f0e8b0" opacity="0.51"/>
<circle cx="282.1" cy="428.9" r="0.55" fill="#f0e8b0" opacity="0.40"/>
<circle cx="421.0" cy="329.0" r="0.55" fill="#f0e8b0" opacity="0.55"/>
<circle cx="295.2" cy="400.6" r="0.45" fill="#f0e8b0" opacity="0.54"/>
<circle cx="311.0" cy="399.9" r="0.45" fill="#f0e8b0" opacity="0.72"/>
<circle cx="323.3" cy="400.6" r="0.35" fill="#f0e8b0" opacity="0.64"/>
<circle cx="397.3" cy="366.7" r="0.35" fill="#f0e8b0" opacity="0.67"/>
<circle cx="290.2" cy="414.9" r="0.35" fill="#f0e8b0" opacity="0.88"/>
<circle cx="352.6" cy="393.8" r="0.55" fill="#f0e8b0" opacity="0.72"/>
<circle cx="434.7" cy="340.3" r="0.35" fill="#f0e8b0" opacity="0.41"/>
<circle cx="379.3" cy="374.7" r="0.45" fill="#f0e8b0" opacity="0.84"/>
<circle cx="405.9" cy="350.9" r="0.55" fill="#f0e8b0" opacity="0.61"/>
<circle cx="465.1" cy="281.5" r="0.45" fill="#f0e8b0" opacity="0.51"/>
<circle cx="316.8" cy="450.6" r="0.45" fill="#f0e8b0" opacity="0.86"/>
<circle cx="400.9" cy="409.0" r="0.35" fill="#f0e8b0" opacity="0.65"/>
<circle cx="376.2" cy="415.8" r="0.55" fill="#f0e8b0" opacity="0.57"/>
<circle cx="351.2" cy="447.4" r="0.45" fill="#f0e8b0" opacity="0.58"/>
<circle cx="382.9" cy="410.9" r="0.45" fill="#f0e8b0" opacity="0.50"/>
<circle cx="306.5" cy="446.0" r="0.45" fill="#f0e8b0" opacity="0.77"/>
<circle cx="320.9" cy="447.7" r="0.55" fill="#f0e8b0" opacity="0.43"/>
<circle cx="414.4" cy="411.7" r="0.45" fill="#f0e8b0" opacity="0.88"/>
<circle cx="315.8" cy="446.2" r="0.45" fill="#f0e8b0" opacity="0.78"/>
<circle cx="339.6" cy="422.4" r="0.35" fill="#f0e8b0" opacity="0.52"/>
<circle cx="349.3" cy="440.1" r="0.35" fill="#f0e8b0" opacity="0.53"/>
<circle cx="341.8" cy="439.2" r="0.45" fill="#f0e8b0" opacity="0.45"/>
<circle cx="310.0" cy="459.2" r="0.55" fill="#f0e8b0" opacity="0.65"/>
<circle cx="349.7" cy="424.8" r="0.35" fill="#f0e8b0" opacity="0.85"/>
<circle cx="377.8" cy="423.8" r="0.45" fill="#f0e8b0" opacity="0.61"/>
<circle cx="302.9" cy="457.6" r="0.55" fill="#f0e8b0" opacity="0.43"/>
<circle cx="394.9" cy="405.0" r="0.55" fill="#f0e8b0" opacity="0.47"/>
<circle cx="374.8" cy="418.2" r="0.45" fill="#f0e8b0" opacity="0.43"/>
<circle cx="395.8" cy="407.7" r="0.35" fill="#f0e8b0" opacity="0.89"/>
<circle cx="397.5" cy="409.2" r="0.35" fill="#f0e8b0" opacity="0.61"/>
<circle cx="403.4" cy="406.8" r="0.55" fill="#f0e8b0" opacity="0.43"/>
<circle cx="401.3" cy="394.4" r="0.45" fill="#f0e8b0" opacity="0.62"/>
<circle cx="361.6" cy="425.6" r="0.55" fill="#f0e8b0" opacity="0.84"/>
<circle cx="331.4" cy="451.3" r="0.55" fill="#f0e8b0" opacity="0.46"/>
<circle cx="342.9" cy="437.5" r="0.35" fill="#f0e8b0" opacity="0.87"/>
<circle cx="411.5" cy="396.2" r="0.45" fill="#f0e8b0" opacity="0.50"/>
<circle cx="345.9" cy="438.5" r="0.55" fill="#f0e8b0" opacity="0.87"/>
<circle cx="374.0" cy="426.8" r="0.55" fill="#f0e8b0" opacity="0.63"/>
<circle cx="360.9" cy="429.9" r="0.45" fill="#f0e8b0" opacity="0.73"/>
<circle cx="381.5" cy="433.4" r="0.45" fill="#f0e8b0" opacity="0.82"/>
<circle cx="349.9" cy="430.4" r="0.45" fill="#f0e8b0" opacity="0.62"/>
<circle cx="351.9" cy="426.4" r="0.35" fill="#f0e8b0" opacity="0.40"/>
<circle cx="331.9" cy="439.9" r="0.45" fill="#f0e8b0" opacity="0.44"/>
<circle cx="348.8" cy="438.0" r="0.45" fill="#f0e8b0" opacity="0.88"/>
<circle cx="312.7" cy="455.1" r="0.35" fill="#f0e8b0" opacity="0.68"/>
<circle cx="330.3" cy="432.7" r="0.35" fill="#f0e8b0" opacity="0.59"/>
<circle cx="393.9" cy="396.7" r="0.45" fill="#f0e8b0" opacity="0.81"/>
<circle cx="401.4" cy="406.9" r="0.45" fill="#f0e8b0" opacity="0.44"/>
<circle cx="417.9" cy="409.4" r="0.55" fill="#f0e8b0" opacity="0.64"/>
<circle cx="405.8" cy="413.0" r="0.45" fill="#f0e8b0" opacity="0.67"/>
<circle cx="398.9" cy="394.4" r="0.45" fill="#f0e8b0" opacity="0.50"/>
<circle cx="408.4" cy="411.1" r="0.45" fill="#f0e8b0" opacity="0.77"/>
<circle cx="382.0" cy="406.9" r="0.45" fill="#f0e8b0" opacity="0.42"/>
<circle cx="390.9" cy="396.7" r="0.45" fill="#f0e8b0" opacity="0.52"/>
<circle cx="395.0" cy="402.9" r="0.55" fill="#f0e8b0" opacity="0.78"/>
<circle cx="309.5" cy="460.1" r="0.35" fill="#f0e8b0" opacity="0.59"/>
<circle cx="321.6" cy="440.9" r="0.45" fill="#f0e8b0" opacity="0.43"/>
<circle cx="383.7" cy="402.8" r="0.35" fill="#f0e8b0" opacity="0.53"/>
<circle cx="386.1" cy="418.9" r="0.55" fill="#f0e8b0" opacity="0.43"/>
<circle cx="391.2" cy="405.9" r="0.55" fill="#f0e8b0" opacity="0.57"/>
<circle cx="405.5" cy="413.1" r="0.45" fill="#f0e8b0" opacity="0.57"/>
<circle cx="345.8" cy="437.8" r="0.55" fill="#f0e8b0" opacity="0.42"/>
<circle cx="402.2" cy="417.5" r="0.55" fill="#f0e8b0" opacity="0.76"/>
<circle cx="404.0" cy="400.9" r="0.45" fill="#f0e8b0" opacity="0.86"/>
<circle cx="367.5" cy="408.3" r="0.45" fill="#f0e8b0" opacity="0.40"/>
<circle cx="388.0" cy="408.8" r="0.55" fill="#f0e8b0" opacity="0.86"/>
<circle cx="323.6" cy="456.3" r="0.55" fill="#f0e8b0" opacity="0.87"/>
<circle cx="348.3" cy="430.2" r="0.35" fill="#f0e8b0" opacity="0.41"/>
<circle cx="308.6" cy="462.9" r="0.35" fill="#f0e8b0" opacity="0.45"/>
<circle cx="394.6" cy="402.2" r="0.55" fill="#f0e8b0" opacity="0.88"/>
<circle cx="428.0" cy="317.0" r="0.7" fill="#fff6c8" opacity="0.85"/>
<circle cx="432.0" cy="320.0" r="0.7" fill="#fff6c8" opacity="0.85"/>
<circle cx="425.0" cy="313.0" r="0.7" fill="#fff6c8" opacity="0.85"/>
<circle cx="436.0" cy="316.0" r="0.7" fill="#fff6c8" opacity="0.85"/>
<circle cx="430.0" cy="323.0" r="0.7" fill="#fff6c8" opacity="0.85"/>
<circle cx="440.0" cy="318.0" r="0.7" fill="#fff6c8" opacity="0.85"/>
<circle cx="422.0" cy="318.0" r="0.7" fill="#fff6c8" opacity="0.85"/>
  <ellipse cx="222" cy="311" rx="9" ry="2" fill="#c8c0a0" opacity="0.55" filter="url(#b1)" transform="rotate(-28 222 311)"/>
  <ellipse cx="120" cy="360" rx="9" ry="2.2" fill="#c8c0a0" opacity="0.5" filter="url(#b1)" transform="rotate(-30 120 360)"/>
  <ellipse cx="8" cy="386" rx="7" ry="2" fill="#c8c0a0" opacity="0.4" filter="url(#b1)" transform="rotate(-30 8 386)"/>
  <ellipse cx="346" cy="305.5" rx="6" ry="1.8" fill="#d8d0a8" opacity="0.7" filter="url(#b1)"/>
</g>
<g id="labels"><text x="71.2" y="335.9" class="lb">Regina, SK</text>
<text x="35.4" y="352.7" class="lb">Saskatoon, SK</text>
<text x="127.9" y="354.3" class="lb">Boise, ID</text>
<text x="10.0" y="394.8" class="lb">Spokane, WA</text>
<text x="224.2" y="306.9" class="lb">Salt Lake</text>
<text x="347.8" y="303.3" class="lb">Las Vegas, NV</text>
<text x="437.0" y="278.0" class="lb">Hermosillo</text>
<text x="481.7" y="279.4" class="lb">La Paz</text>
<text x="430.0" y="293.9" class="lb">Mexicali</text>
<text x="453.0" y="301.9" class="lb">Tijuana</text>
<text x="426.7" y="308.9" class="lb">Riverside, CA</text>
<text x="435.8" y="316.4" class="lb">Los Angeles, CA</text>
<text x="441.7" y="322.2" class="lb">Thousand Oaks, CA</text>
<text x="410.8" y="330.9" class="lb">Bakersfield, CA</text>
<text x="383.4" y="341.6" class="lb">Visalia, CA</text>
<text x="374.0" y="351.9" class="lb">Fresno, CA</text>
<text x="351.5" y="385.0" class="lb">Modesto, CA</text>
<text x="405.9" y="388.0" class="lb">Salinas, CA</text>
<text x="339.0" y="395.9" class="lb">Stockton, CA</text>
<text x="378.3" y="403.4" class="lb">San Jose, CA</text>
<text x="307.9" y="409.0" class="lb">Sacramento, CA</text>
<text x="369.3" y="409.0" class="lb">Fremont, CA</text>
<text x="346.9" y="416.9" class="lb">Concord, CA</text>
<text x="363.7" y="426.6" class="lb">San Francisco, CA</text>
<text x="327.9" y="448.2" class="lb">Santa Rosa, CA</text>
<text x="272.6" y="378.6" class="lb">N</text>
<text x="383.5" y="283.9" class="lb" fill="#e8e8e8"></text>
<text x="272" y="386.4" class="lbw">J</text><text x="288.6" y="386.4" class="lbw">here</text>
<text x="412.5" y="283.9" class="lb" text-anchor="end">Phoenix, AZ</text></g>
<g id="iss"><polygon points="296,256 330,250 342,244.2 374.4,249.4 392,258.8 390,268 345,272 300,276" fill="url(#plane)"/>
<polygon points="300,255 342,250 345,266 300,272" fill="#0a0a0a"/>
<polygon points="402,244 437,240.5 452,246 456,257 420,262 404,258" fill="url(#plane2)"/>
<rect x="191.0" y="278.5" width="4.2" height="8.5" fill="#d8d8dc"/>
<rect x="261.0" y="271.0" width="4.2" height="8.0" fill="#d8d8dc"/>
<rect x="196.0" y="290.0" width="4.2" height="11.0" fill="#d8d8dc"/>
<rect x="263.0" y="287.0" width="4.2" height="6.0" fill="#d8d8dc"/>
<rect x="501.5" y="247.0" width="4.2" height="7.0" fill="#d8d8dc"/>
<rect x="539.7" y="243.0" width="4.2" height="6.0" fill="#d8d8dc"/>
<rect x="499.5" y="257.0" width="4.2" height="6.5" fill="#d8d8dc"/>
<rect x="538.5" y="253.0" width="4.2" height="6.0" fill="#d8d8dc"/>
<polygon points="190.0,282.5 544.0,245.9 544.0,248.8 190.0,286.1" fill="#101012"/>
<polygon points="190.0,286.1 544.0,248.8 544.0,252.7 190.0,290.9" fill="url(#truss)"/>
<polygon points="190.0,290.9 544.0,252.7 544.0,254.3 190.0,292.9" fill="#7a7888"/>
<polygon points="190.0,292.9 544.0,254.3 544.0,254.9 190.0,293.7" fill="#a8a8b4"/>
<ellipse cx="562" cy="258.3" rx="5" ry="1" fill="#d8d8d8" transform="rotate(-6 562 258.3)"/>
<polyline points="336,272.5 361.4,282.3 379,273.2" fill="none" stroke="#d8d8d8" stroke-width="0.7"/>
<polygon points="190.8,288 205.4,288 202.3,303.6 187.7,304.7" fill="#030303"/>
<polygon points="267.5,280.6 278.8,280 282.5,293.5 269.8,294.4" fill="#030303"/>
<polygon points="494,255.5 509,254.8 520,263.8 504,264.5" fill="#060606"/>
<rect x="297.2" y="257.9" width="15.1" height="13.1" fill="#080808"/><rect x="298.7" y="259.5" width="5.4" height="2.4" fill="#dcdcdc"/><rect x="298.7" y="263.2" width="5.4" height="2.4" fill="#dcdcdc"/><rect x="298.7" y="266.9" width="5.4" height="2.4" fill="#dcdcdc"/><rect x="305.2" y="259.5" width="5.4" height="2.4" fill="#dcdcdc"/><rect x="305.2" y="263.2" width="5.4" height="2.4" fill="#dcdcdc"/><rect x="305.2" y="266.9" width="5.4" height="2.4" fill="#dcdcdc"/>
<rect x="313.5" y="256.6" width="13.7" height="12.4" fill="#080808"/><rect x="315.0" y="258.2" width="4.6" height="2.2" fill="#dcdcdc"/><rect x="315.0" y="261.7" width="4.6" height="2.2" fill="#dcdcdc"/><rect x="315.0" y="265.1" width="4.6" height="2.2" fill="#dcdcdc"/><rect x="320.9" y="258.2" width="4.6" height="2.2" fill="#dcdcdc"/><rect x="320.9" y="261.7" width="4.6" height="2.2" fill="#dcdcdc"/><rect x="320.9" y="265.1" width="4.6" height="2.2" fill="#dcdcdc"/>
<rect x="299.1" y="280.0" width="13.2" height="10.5" fill="#080808"/><rect x="300.0" y="281.0" width="5.0" height="1.9" fill="#dcdcdc"/><rect x="300.0" y="284.2" width="5.0" height="1.9" fill="#dcdcdc"/><rect x="300.0" y="287.5" width="5.0" height="1.9" fill="#dcdcdc"/><rect x="306.2" y="281.0" width="5.0" height="1.9" fill="#dcdcdc"/><rect x="306.2" y="284.2" width="5.0" height="1.9" fill="#dcdcdc"/><rect x="306.2" y="287.5" width="5.0" height="1.9" fill="#dcdcdc"/>
<rect x="314.8" y="278.0" width="12.5" height="10.6" fill="#080808"/><rect x="315.7" y="279.0" width="4.6" height="2.0" fill="#dcdcdc"/><rect x="315.7" y="282.3" width="4.6" height="2.0" fill="#dcdcdc"/><rect x="315.7" y="285.5" width="4.6" height="2.0" fill="#dcdcdc"/><rect x="321.5" y="279.0" width="4.6" height="2.0" fill="#dcdcdc"/><rect x="321.5" y="282.3" width="4.6" height="2.0" fill="#dcdcdc"/><rect x="321.5" y="285.5" width="4.6" height="2.0" fill="#dcdcdc"/>
<rect x="451.4" y="242.0" width="13.1" height="12.4" fill="#080808"/><rect x="452.9" y="243.6" width="4.4" height="2.2" fill="#dcdcdc"/><rect x="452.9" y="247.1" width="4.4" height="2.2" fill="#dcdcdc"/><rect x="452.9" y="250.5" width="4.4" height="2.2" fill="#dcdcdc"/><rect x="458.4" y="243.6" width="4.4" height="2.2" fill="#dcdcdc"/><rect x="458.4" y="247.1" width="4.4" height="2.2" fill="#dcdcdc"/><rect x="458.4" y="250.5" width="4.4" height="2.2" fill="#dcdcdc"/>
<rect x="463.2" y="242.0" width="13.1" height="12.4" fill="#080808"/><rect x="464.7" y="243.6" width="4.4" height="2.2" fill="#dcdcdc"/><rect x="464.7" y="247.1" width="4.4" height="2.2" fill="#dcdcdc"/><rect x="464.7" y="250.5" width="4.4" height="2.2" fill="#dcdcdc"/><rect x="470.2" y="243.6" width="4.4" height="2.2" fill="#dcdcdc"/><rect x="470.2" y="247.1" width="4.4" height="2.2" fill="#dcdcdc"/><rect x="470.2" y="250.5" width="4.4" height="2.2" fill="#dcdcdc"/>
<rect x="451.0" y="260.8" width="11.9" height="10.2" fill="#080808"/><rect x="451.9" y="261.8" width="4.4" height="1.8" fill="#dcdcdc"/><rect x="451.9" y="264.9" width="4.4" height="1.8" fill="#dcdcdc"/><rect x="451.9" y="268.1" width="4.4" height="1.8" fill="#dcdcdc"/><rect x="457.4" y="261.8" width="4.4" height="1.8" fill="#dcdcdc"/><rect x="457.4" y="264.9" width="4.4" height="1.8" fill="#dcdcdc"/><rect x="457.4" y="268.1" width="4.4" height="1.8" fill="#dcdcdc"/>
<rect x="462.6" y="260.8" width="11.6" height="10.2" fill="#080808"/><rect x="463.5" y="261.8" width="4.2" height="1.8" fill="#dcdcdc"/><rect x="463.5" y="264.9" width="4.2" height="1.8" fill="#dcdcdc"/><rect x="463.5" y="268.1" width="4.2" height="1.8" fill="#dcdcdc"/><rect x="468.9" y="261.8" width="4.2" height="1.8" fill="#dcdcdc"/><rect x="468.9" y="264.9" width="4.2" height="1.8" fill="#dcdcdc"/><rect x="468.9" y="268.1" width="4.2" height="1.8" fill="#dcdcdc"/>
<rect x="381" y="279" width="13" height="12" fill="url(#cylv)"/>
<ellipse cx="387.5" cy="291" rx="6.5" ry="1.5" fill="#9a9a9a"/>
<rect x="380.4" y="265.4" width="27.4" height="13" fill="url(#cylh)"/>
<circle cx="414.9" cy="268.6" r="7.4" fill="#1a1a1a"/>
<circle cx="414.9" cy="268.6" r="6.2" fill="#e6e6e6"/>
<circle cx="414.9" cy="268.6" r="4.6" fill="#bdbdbd"/>
<path d="M411.5,270 L414,266 L418,265.5 L416.5,268 L419,270 L415,271 Z" fill="#222"/>
<rect x="421.4" y="261.5" width="17.6" height="13" fill="url(#cylh)"/>
<polygon points="366,223.9 389,223.9 389,227.5 366,227.5" fill="#6e6e6e"/>
<rect x="367" y="224.2" width="1.6" height="3" fill="#a8a8a8"/>
<rect x="370" y="224.2" width="1.6" height="3" fill="#a8a8a8"/>
<rect x="373" y="224.2" width="1.6" height="3" fill="#a8a8a8"/>
<rect x="376" y="224.2" width="1.6" height="3" fill="#a8a8a8"/>
<rect x="379" y="224.2" width="1.6" height="3" fill="#a8a8a8"/>
<rect x="382" y="224.2" width="1.6" height="3" fill="#a8a8a8"/>
<rect x="385" y="224.2" width="1.6" height="3" fill="#a8a8a8"/>
<rect x="388" y="224.2" width="1.6" height="3" fill="#a8a8a8"/>
<rect x="374.4" y="222.3" width="6.2" height="7.3" fill="url(#cylv)"/>
<polygon points="378.5,230.6 402.5,230.6 402.5,234.8 378.5,234.8" fill="#5e5e5e"/>
<rect x="379" y="231" width="1.6" height="3.4" fill="#9a9a9a"/>
<rect x="382" y="231" width="1.6" height="3.4" fill="#9a9a9a"/>
<rect x="385" y="231" width="1.6" height="3.4" fill="#9a9a9a"/>
<rect x="388" y="231" width="1.6" height="3.4" fill="#9a9a9a"/>
<rect x="391" y="231" width="1.6" height="3.4" fill="#9a9a9a"/>
<rect x="394" y="231" width="1.6" height="3.4" fill="#9a9a9a"/>
<rect x="397" y="231" width="1.6" height="3.4" fill="#9a9a9a"/>
<rect x="400" y="231" width="1.6" height="3.4" fill="#9a9a9a"/>
<rect x="385.8" y="229.6" width="6.8" height="6.2" fill="url(#cylv)"/>
<rect x="394.2" y="230.6" width="4.1" height="3.6" fill="#e0e0e0"/>
<rect x="389" y="237" width="13.5" height="15.5" fill="url(#cylv)"/>
<ellipse cx="395.75" cy="237" rx="6.75" ry="1.4" fill="#f4f4f4"/>
<circle cx="397.3" cy="242.6" r="1.9" fill="#2a2a2a"/>
<line x1="355.6" y1="227" x2="362.4" y2="235.3" stroke="#8a8a8a" stroke-width="0.7"/>
<ellipse cx="362" cy="236.5" rx="3" ry="1.6" fill="#6a6a6a"/>
<path d="M367,246 Q368,238 376,238.5 L376,242 Q371,242 370.5,246.5 Z" fill="#8a8a8a"/>
<path d="M383.5,254.5 Q384,248 389.5,248.5 L389.5,251 Q386.5,251 386,254.8 Z" fill="#9a9a9a"/>
<ellipse cx="379" cy="246" rx="5" ry="5.5" fill="#1e1e1e"/>
<polygon points="367,258 389,258 389,262 367,262" fill="#6a6a6a"/>
<rect x="375.4" y="257.7" width="5.2" height="4.2" fill="#e6e6e6"/>
<polygon points="196.8,303 201.6,302.5 209.5,385 204.5,385" fill="url(#mastg)"/>
<polygon points="263.2,294 267.6,293.6 274,385 269.6,385" fill="url(#mastg)"/>
<polygon points="145.7,122.3 167.3,123.3 190.7,278.0 172.0,280.1" fill="url(#g0)" stroke="#c98e5a" stroke-width="0.7" stroke-linejoin="round"/>
<line x1="145.7" y1="122.9" x2="167.3" y2="123.9" stroke="#dca064" stroke-width="1.5"/>
<polygon points="172.1,123.3 192.1,123.9 212.6,276.5 194.4,277.3" fill="url(#g1)" stroke="#c98e5a" stroke-width="0.7" stroke-linejoin="round"/>
<line x1="172.1" y1="123.9" x2="192.1" y2="124.5" stroke="#dca064" stroke-width="1.5"/>
<polygon points="228.9,125.1 246.9,125.4 260.7,271.2 244.6,272.5" fill="url(#g2)" stroke="#c98e5a" stroke-width="0.7" stroke-linejoin="round"/>
<line x1="228.9" y1="125.7" x2="246.9" y2="126.0" stroke="#dca064" stroke-width="1.5"/>
<polygon points="251.2,125.6 268.8,126.2 280.0,270.2 264.4,271.2" fill="url(#g3)" stroke="#c98e5a" stroke-width="0.7" stroke-linejoin="round"/>
<line x1="251.2" y1="126.2" x2="268.8" y2="126.8" stroke="#dca064" stroke-width="1.5"/>
<polygon points="176.5,301.9 197.5,300.5 212.7,419.6 197.1,423.3" fill="url(#g4)" stroke="#c98e5a" stroke-width="0.7" stroke-linejoin="round"/>
<line x1="176.5" y1="302.5" x2="197.5" y2="301.1" stroke="#dca064" stroke-width="1.5"/>
<polygon points="201.8,298.4 215.8,297.4 231.9,415.4 216.9,418.5" fill="url(#g5)" stroke="#c98e5a" stroke-width="0.7" stroke-linejoin="round"/>
<line x1="201.8" y1="299.0" x2="215.8" y2="298.0" stroke="#dca064" stroke-width="1.5"/>
<polygon points="248.1,293.1 261.9,292.2 273.8,406.0 260.0,408.8" fill="url(#g6)" stroke="#c98e5a" stroke-width="0.7" stroke-linejoin="round"/>
<line x1="248.1" y1="293.7" x2="261.9" y2="292.8" stroke="#dca064" stroke-width="1.5"/>
<polygon points="268.0,294.0 282.5,293.8 290.8,401.9 277.3,405.0" fill="url(#g7)" stroke="#c98e5a" stroke-width="0.7" stroke-linejoin="round"/>
<line x1="268.0" y1="294.6" x2="282.5" y2="294.4" stroke="#dca064" stroke-width="1.5"/>
<polygon points="502.4,133.0 513.9,133.0 503.2,246.7 492.1,247.6" fill="url(#g8)" stroke="#c98e5a" stroke-width="0.7" stroke-linejoin="round"/>
<line x1="502.4" y1="133.6" x2="513.9" y2="133.6" stroke="#dca064" stroke-width="1.5"/>
<polygon points="516.0,133.0 526.4,133.3 514.6,245.4 505.0,246.5" fill="url(#g9)" stroke="#c98e5a" stroke-width="0.7" stroke-linejoin="round"/>
<line x1="516.0" y1="133.6" x2="526.4" y2="133.9" stroke="#dca064" stroke-width="1.5"/>
<polygon points="544.5,134.0 554.9,134.0 542.3,242.6 531.2,243.4" fill="url(#g10)" stroke="#c98e5a" stroke-width="0.7" stroke-linejoin="round"/>
<line x1="544.5" y1="134.6" x2="554.9" y2="134.6" stroke="#dca064" stroke-width="1.5"/>
<polygon points="556.7,134.3 566.1,134.6 552.3,241.5 543.4,242.5" fill="url(#g11)" stroke="#c98e5a" stroke-width="0.7" stroke-linejoin="round"/>
<line x1="556.7" y1="134.9" x2="566.1" y2="135.2" stroke="#dca064" stroke-width="1.5"/>
<polygon points="490.8,263.6 500.6,263.0 491.9,356.1 481.7,358.6" fill="url(#g12)" stroke="#c98e5a" stroke-width="0.7" stroke-linejoin="round"/>
<line x1="490.8" y1="264.2" x2="500.6" y2="263.6" stroke="#dca064" stroke-width="1.5"/>
<polygon points="501.7,262.9 511.6,262.3 503.1,353.9 493.5,355.7" fill="url(#g13)" stroke="#c98e5a" stroke-width="0.7" stroke-linejoin="round"/>
<line x1="501.7" y1="263.5" x2="511.6" y2="262.9" stroke="#dca064" stroke-width="1.5"/>
<polygon points="528.0,259.0 538.4,258.4 527.6,348.1 518.1,350.3" fill="url(#g14)" stroke="#c98e5a" stroke-width="0.7" stroke-linejoin="round"/>
<line x1="528.0" y1="259.6" x2="538.4" y2="259.0" stroke="#dca064" stroke-width="1.5"/>
<polygon points="539.5,258.3 549.0,257.1 538.1,346.6 528.8,347.8" fill="url(#g15)" stroke="#c98e5a" stroke-width="0.7" stroke-linejoin="round"/>
<line x1="539.5" y1="258.9" x2="549.0" y2="257.7" stroke="#dca064" stroke-width="1.5"/></g>
<!-- side buttons -->
<g>
  <circle cx="9.9" cy="448.8" r="5.4" fill="#1a2458" stroke="#46689a" stroke-width="1"/>
  <path d="M7.3,446.3 L9.9,449.2 L12.5,446.3 M9.9,449.2 L9.9,451.6" stroke="#62b4e0" stroke-width="1.2" fill="none"/>
  <circle cx="758.5" cy="448.8" r="5.4" fill="#1a2458" stroke="#46689a" stroke-width="1"/>
  <path d="M756,451.3 L758.5,446 L761,451.3" stroke="#62b4e0" stroke-width="1.2" fill="none"/>
</g>
<rect x="0" y="34" width="1.2" height="426" fill="#3a3a3a"/>
<rect x="766" y="34" width="1" height="425" fill="#4a4a4a"/><rect x="767" y="34" width="1" height="425" fill="#1a1a1a"/>
</svg>

<div id="menubar"></div>
<div id="titlebar"></div>
<div id="infobar"></div>
<div id="toolbar"></div>
<!-- menu bar content -->
<svg style="position:absolute;left:10px;top:1px" width="9" height="10" viewBox="0 0 9 10"><path d="M6.1,0.3 C5.3,0.4 4.6,1 4.5,1.9 C5.3,1.9 6,1.3 6.1,0.3 Z M4.4,2.5 C3.8,2.5 3.2,2.1 2.6,2.1 C1.4,2.1 0.5,3.1 0.5,4.7 C0.5,6.6 1.8,9.2 3,9.2 C3.6,9.2 3.8,8.9 4.5,8.9 C5.2,8.9 5.4,9.2 6,9.2 C7,9.2 7.9,7.4 8.2,6.5 C7.2,6.1 6.9,4.6 7.9,3.4 C7.4,2.6 6.7,2.2 6,2.2 C5.3,2.2 5,2.5 4.4,2.5 Z" fill="#f2f2f2"/></svg>
<div class="mi" style="left:29px;font-weight:bold;">Orbitrack</div>
<div class="mi" style="left:74px;">View</div>
<div class="mi" style="left:100px;">Window</div>
<div class="mi" style="left:137.5px;">Help</div>
<div class="mi" style="left:629.6px;">Mon Nov 16&nbsp; 3:58:01 PM</div>
<!-- status icons -->
<svg style="position:absolute;left:518px;top:0" width="250" height="12" viewBox="518 0 250 12">
  <g fill="none" stroke="#eeeeee" stroke-width="0.9">
    <path d="M523,8 L521,8 L521,2.5 L531,2.5 L531,8 L529,8"/>
    <path d="M540.5,6 A4,4 0 1 0 541.5,3.5 M540,3 L541.6,3.8 L542.4,2.2"/>
    <path d="M544.3,3.6 L544.3,6 L545.5,6.8"/>
    <path d="M574,4.3 Q579.5,0 585,4.3 M575.6,6 Q579.5,3 583.4,6 M577.2,7.6 Q579.5,5.8 581.8,7.6"/>
    <path d="M596.5,3.2 Q598.3,5.5 596.5,7.8 M598.3,2 Q601,5.5 598.3,9"/>
    <rect x="606.5" y="3" width="11" height="5.5" rx="1"/>
    <path d="M732,2.2 m-2.5,0 a2.5,2.5 0 1 0 5,0 a2.5,2.5 0 1 0 -5,0 M734.5,4.5 L737,7.5" transform="translate(0,2)"/>
  </g>
  <path d="M523.5,9.5 L526,6.2 L528.5,9.5 Z" fill="#eee"/>
  <path d="M589,4 L591,4 L594,1.8 L594,9.2 L591,7 L589,7 Z" fill="#eee"/>
  <rect x="607.5" y="4" width="7.5" height="3.5" fill="#eee"/>
  <rect x="618" y="4.5" width="1" height="2.5" fill="#eee"/>
  <path d="M561.5,2 L565,4.5 L561.5,7.5 M561.5,2 L561.5,9.5 L565,7 L561.5,4.5" stroke="#ccc" stroke-width="0.8" fill="none"/>
  <g fill="#eee"><rect x="747.5" y="3" width="8.5" height="0.9"/><rect x="747.5" y="5.1" width="8.5" height="0.9"/><rect x="747.5" y="7.2" width="8.5" height="0.9"/><rect x="747.5" y="9.3" width="8.5" height="0.9"/><rect x="746" y="3" width="0.9" height="0.9"/><rect x="746" y="5.1" width="0.9" height="0.9"/><rect x="746" y="7.2" width="0.9" height="0.9"/><rect x="746" y="9.3" width="0.9" height="0.9"/></g>
</svg>
<!-- title bar -->
<svg style="position:absolute;left:0;top:12px" width="40" height="11"><circle cx="7.6" cy="5.9" r="3.3" fill="#ec5f58"/><circle cx="18.1" cy="5.9" r="3.3" fill="#e2be3e"/><circle cx="28.6" cy="5.9" r="3.3" fill="#5cc23c"/></svg>
<div class="t" style="left:368.7px;top:15.3px;font-size:7.3px;color:#bcbcbc;">Orbitrack</div>
<!-- info bar -->
<div class="info" style="left:2px;top:26.2px;">Longitude 125° 54' W&nbsp; Latitude 38° 40' N&nbsp; Altitude 421 km</div>
<div class="green" style="left:2px;top:35px;">30 m from SPACE STATION</div>
<div class="info" style="right:1.6px;top:26px;font-size:6.3px;">2020 Nov 16 Mon 19:58:58</div>
<div class="green" style="right:1.6px;top:34px;font-size:6.9px;">FoV: 142.0° x 90.0°</div>
<!-- toolbar icons -->
<svg style="position:absolute;left:0;top:460px" width="768" height="20" viewBox="0 460 768 20">
  <g fill="none" stroke="#2a72a8" stroke-width="0.8">
    <circle cx="35" cy="467.3" r="5.6"/><path d="M30.5,469 L39.5,469 M32,465 L32.8,465.6 M38,465 L37.2,465.6 M35,463.5 L35,464.3"/>
    <circle cx="104.5" cy="467.3" r="5.6"/><path d="M101.5,470 L104.5,467.3"/>
    <path d="M170.5,471 L177.5,464 M172,466 L176,470 M174.5,462.8 L178.5,466.8 M169,468 Q170,472 174,473"/>
    <rect x="238.5" y="463" width="11" height="8"/><path d="M238.5,467 Q241,465 243.5,468 Q246,471 249.5,468.5"/>
    <g stroke="#2f8ad0" stroke-width="1.1"><circle cx="314" cy="467.5" r="5.2"/><circle cx="314" cy="467.5" r="2.6"/><path d="M314,467.5 L319,462.2"/></g>
    <g stroke="#4a5e70"><circle cx="383.5" cy="466.5" r="4.6"/><path d="M386.8,469.8 L389.5,472.5"/></g>
    <circle cx="454" cy="467.3" r="5.6"/><path d="M454,465.5 L454,470.5 M454,463.6 L454,464.4"/>
    <circle cx="524" cy="467.3" r="3.6"/><circle cx="524" cy="467.3" r="5.4" stroke-dasharray="2 1.2"/><circle cx="524" cy="467.3" r="1.4"/>
    <circle cx="594" cy="467.3" r="5.6"/><path d="M594,463.8 L594,467.5 L591.5,469.5"/>
    <path d="M664,461.8 A5.6,5.6 0 1 1 658,470.5 A5,5 0 0 0 664,461.8 Z"/>
    <circle cx="734" cy="467.3" r="5.6"/><path d="M732,465.3 Q732,463.5 734,463.5 Q736,463.5 736,465.3 Q736,466.6 734,467.6 L734,469.2 M734,470.3 L734,471"/>
  </g>
</svg>
<div class="tbl" style="left:35px;">Sky</div>
<div class="tbl" style="left:104.5px;">Orbit</div>
<div class="tbl" style="left:174px;">Satellite</div>
<div class="tbl" style="left:244px;">Ground</div>
<div class="tbl" style="left:314px;color:#3a90d0;">Center</div>
<div class="tbl" style="left:384px;color:#4a5e70;">Search</div>
<div class="tbl" style="left:454px;">Info</div>
<div class="tbl" style="left:524px;">Settings</div>
<div class="tbl" style="left:594px;">Time</div>
<div class="tbl" style="left:664px;">Night</div>
<div class="tbl" style="left:734px;">Help</div>
</body></html>
